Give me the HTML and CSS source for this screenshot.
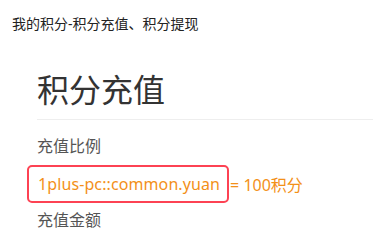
FILE: index.html
```html
<!DOCTYPE html>
<html>
    <head>
        <title>积分充值</title>
        <link rel="stylesheet" href="styles.css">
    </head>
    <body>
        <p class="crumb">我的积分-积分充值、积分提现</p>
        <div class="panel">
            <h1>积分充值</h1>
            <div class="label">充值比例</div>
            <div class="rate">
                <span class="mark">1plus-pc::common.yuan</span>
                <span class="eq">= 100积分</span>
            </div>
            <div class="label">充值金额</div>
        </div>
    </body>
</html>
```
FILE: styles.css
```css
*{
margin: 0;
padding: 0;
box-sizing: border-box;
font-family: "Noto Sans", "Noto Sans CJK SC", sans-serif;
}
body{
background: #fff;
color: #333;
}
.crumb{
font-size: 14px;
line-height: 18px;
padding: 15px 12px 0;
color: #222;
}
.panel{
margin: 0 6px 0 37px;
}
.panel h1{
font-size: 32px;
font-weight: 400;
line-height: 40px;
margin-top: 37px;
padding-bottom: 9px;
border-bottom: 1px solid #eee;
color: #333;
}
.label{
font-size: 16px;
line-height: 22px;
color: #555;
}
.panel h1 + .label{
margin-top: 15px;
}
.rate{
display: flex;
align-items: center;
margin: 8px 0 6px -10px;
font-size: 16px;
color: #f39019;
}
.mark{
border: 2.5px solid #fd4253;
border-radius: 5px;
padding: 6px 7px 6px 9px;
line-height: 22px;
letter-spacing: 0.1px;
}
.eq{
margin-left: 1px;
}
```
